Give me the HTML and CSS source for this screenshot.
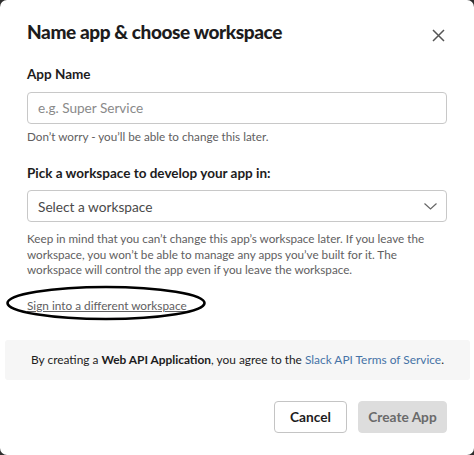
FILE: index.html
```html
<!DOCTYPE html>
<html lang="en">
<head>
<meta charset="utf-8">
<title>Name app &amp; choose workspace</title>
<link rel="stylesheet" href="styles.css">
</head>
<body>
<div class="modal">
  <div class="header">
    <h1 class="title">Name app &amp; choose workspace</h1>
    <button class="close" aria-label="Close">
      <svg width="13" height="13" viewBox="0 0 13 13"><path d="M1 1 L12 12 M12 1 L1 12" stroke="#555" stroke-width="1.5" fill="none"/></svg>
    </button>
  </div>
  <label class="label label-name">App Name</label>
  <div class="input"><span class="placeholder">e.g. Super Service</span></div>
  <p class="hint">Don’t worry - you’ll be able to change this later.</p>
  <label class="label label-pick">Pick a workspace to develop your app in:</label>
  <div class="select">
    <span class="select-text">Select a workspace</span>
    <svg class="chev" width="13" height="7" viewBox="0 0 13 7"><path d="M0.5 0.5 L6.5 6 L12.5 0.5" stroke="#666" stroke-width="1.2" fill="none"/></svg>
  </div>
  <p class="note">Keep in mind that you can’t change this app’s workspace later. If you leave the workspace, you won’t be able to manage any apps you’ve built for it. The workspace will control the app even if you leave the workspace.</p>
  <div class="link-row">
    <a class="signin" href="#">Sign into a different workspace</a>
    <svg class="circle" width="204" height="40" viewBox="0 0 204 40"><ellipse cx="102" cy="20" rx="98.5" ry="16" fill="none" stroke="#000" stroke-width="2.6"/></svg>
  </div>
  <div class="terms"><span>By creating a <b>Web API Application</b>, you agree to the <a href="#">Slack API Terms of Service</a>.</span></div>
  <div class="actions">
    <button class="btn btn-cancel">Cancel</button>
    <button class="btn btn-create">Create App</button>
  </div>
</div>
</body>
</html>
```
FILE: styles.css
```css
* { box-sizing: border-box; }
html, body { margin: 0; padding: 0; }
body {
  background: #2e2e2e;
  font-family: Lato, "Open Sans", sans-serif;
  color: #1d1c1d;
}
.modal {
  width: 474px;
  height: 455px;
  background: #fff;
  border-radius: 7px;
  padding: 18px 27px 0 27px;
  display: flex;
  flex-direction: column;
}
.header {
  display: flex;
  justify-content: space-between;
  align-items: flex-start;
}
.title {
  margin: 0;
  font-size: 19px;
  line-height: 28px;
  font-weight: 900;
  letter-spacing: -0.4px;
}
.close {
  border: 0;
  background: none;
  padding: 0;
  margin: 11px 2px 0 0;
  width: 13px;
  height: 13px;
  display: flex;
}
.label {
  font-weight: 700;
  font-size: 13.5px;
  line-height: 20px;
}
.label-name { margin-top: 18px; }
.input {
  margin-top: 8px;
  height: 32px;
  border: 1px solid #c8c8c8;
  border-radius: 4px;
  padding: 0 10px;
  display: flex;
  align-items: center;
}
.placeholder { font-size: 13.6px; color: #8a8a8a; }
.hint {
  margin: 3px 0 0;
  font-size: 11.7px;
  line-height: 18px;
  color: #616061;
}
.label-pick { margin-top: 18px; }
.select {
  margin-top: 7px;
  height: 32px;
  border: 1px solid #c8c8c8;
  border-radius: 4px;
  padding: 0 9px 0 10px;
  display: flex;
  align-items: center;
  justify-content: space-between;
}
.select-text { font-size: 13.7px; color: #4a4a4a; }
.chev { margin-top: 1px; }
.note {
  margin: 9px 0 0;
  font-size: 11.7px;
  line-height: 15.6px;
  color: #616061;
}
.link-row {
  position: relative;
  margin-top: 17px;
  line-height: 18px;
}
.signin {
  font-size: 11.8px;
  color: #616061;
  text-decoration: underline;
}
.circle {
  position: absolute;
  left: -23px;
  top: -12px;
}
.terms {
  margin: 25px -23px 0 -22px;
  height: 40px;
  background: #f6f6f6;
  border-radius: 3px;
  display: flex;
  align-items: center;
  justify-content: center;
  font-size: 11.9px;
  color: #1d1c1d;
}
.terms b { font-weight: 700; }
.terms a { color: #4673a6; text-decoration: none; }
.actions {
  margin-top: 21px;
  display: flex;
  justify-content: flex-end;
  gap: 11px;
}
.btn {
  height: 32px;
  border-radius: 4px;
  font-family: Lato, "Open Sans", sans-serif;
  font-weight: 700;
  font-size: 13.7px;
  padding: 0;
}
.btn-cancel {
  width: 73px;
  background: #fff;
  border: 1px solid #c4c4c4;
  color: #1d1c1d;
}
.btn-create {
  width: 89px;
  background: #dddddd;
  border: 1px solid #dddddd;
  color: #6a6a6a;
}
```
